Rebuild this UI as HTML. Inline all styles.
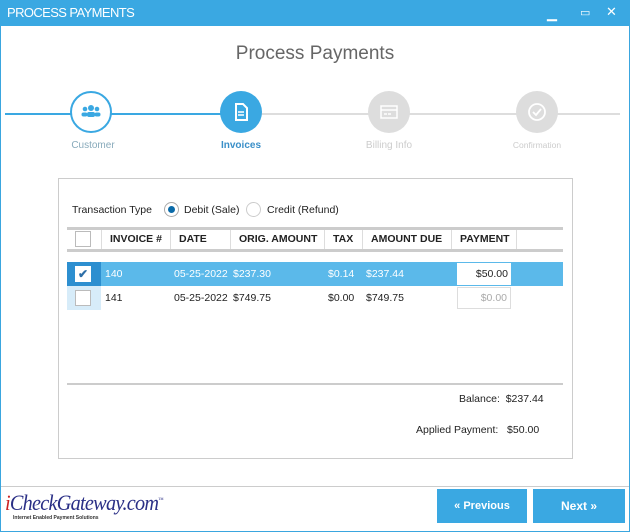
<!DOCTYPE html>
<html><head><style>
*{box-sizing:border-box;margin:0;padding:0}
body{width:630px;height:532px;overflow:hidden;font-family:"Liberation Sans",sans-serif;background:#fff;position:relative;font-size:11px;color:#222}
.win{position:absolute;left:0;top:0;width:630px;height:532px;border:1px solid #3aa6df;border-top:none}
.title{position:absolute;left:0;top:0;width:630px;height:26px;background:#3aa8e2;color:#fff;font-size:13px;padding:5px 7px;letter-spacing:-.6px}
.ctl{position:absolute;top:4px;color:#fff;font-size:13px}
.h1{position:absolute;top:43px;width:630px;text-align:center;font-size:19px;color:#666}
.line{position:absolute;top:113px;height:2px}
.circ{position:absolute;top:91px;width:42px;height:42px;border-radius:50%}
.lbl{position:absolute;top:140px;font-size:10px;text-align:center;width:100px}
.box{position:absolute;left:58px;top:178px;width:515px;height:281px;border:1px solid #ccc}
.abs{position:absolute}
.th{position:absolute;top:227px;height:25px;border-top:3px solid #ccc;border-bottom:3px solid #ccc;left:67px;width:496px}
.th div{position:absolute;top:0;height:19px;line-height:19px;font-weight:bold;font-size:10.5px;border-left:1px solid #ddd;padding-left:8px;color:#222}
.row{position:absolute;left:67px;width:496px;height:24px;line-height:24px;font-size:10.5px}
.row span{position:absolute}
.cb{position:absolute;width:16px;height:16px;border:1px solid #bbb;background:#fff}
.btn{position:absolute;top:489px;height:34px;background:#3aa8e2;color:#fff;font-weight:bold;text-align:center;line-height:34px;font-size:11px}
</style></head><body>
<div class="win"></div>
<div class="title">PROCESS PAYMENTS</div>
<div class="ctl" style="left:547px;top:6px">▁</div>
<div class="ctl" style="left:580px;font-size:11px;top:6px">▭</div>
<div class="ctl" style="left:606px">✕</div>
<div class="h1">Process Payments</div>
<div class="line" style="left:5px;width:236px;background:#3aa8e2;height:1.5px"></div>
<div class="line" style="left:241px;width:379px;background:#ddd"></div>
<div class="circ" style="left:70px;border:2px solid #3aa8e2;background:#fff"><svg width="38" height="38" viewBox="0 0 38 38"><g fill="#3aa8e2"><circle cx="19" cy="15" r="3"/><circle cx="13" cy="16" r="2.3"/><circle cx="25" cy="16" r="2.3"/><rect x="15" y="19" width="8" height="5" rx="2"/><rect x="9.5" y="19.5" width="6" height="4" rx="2"/><rect x="22.5" y="19.5" width="6" height="4" rx="2"/></g></svg></div>
<div class="circ" style="left:220px;background:#3aa8e2"><svg width="42" height="42" viewBox="0 0 42 42"><path d="M16 13h7l4 4v12h-11z" fill="none" stroke="#fff" stroke-width="2"/><path d="M18 21h6M18 24h6" stroke="#fff" stroke-width="1.5"/></svg></div>
<div class="circ" style="left:368px;background:#ddd"><svg width="42" height="42" viewBox="0 0 42 42"><rect x="13" y="15" width="16" height="12" fill="none" stroke="#fff" stroke-width="1.5"/><path d="M13 19h16M16 23h3M20 23h3" stroke="#fff" stroke-width="1.5"/></svg></div>
<div class="circ" style="left:516px;background:#ddd"><svg width="42" height="42" viewBox="0 0 42 42"><circle cx="21" cy="21" r="8" fill="none" stroke="#fff" stroke-width="1.8"/><path d="M17 21l3 3 5-6" fill="none" stroke="#fff" stroke-width="1.8"/></svg></div>
<div class="lbl" style="left:43px;color:#8ab">Customer</div>
<div class="lbl" style="left:191px;color:#3a8fc8;font-weight:bold">Invoices</div>
<div class="lbl" style="left:339px;color:#ccc">Billing Info</div>
<div class="lbl" style="left:487px;color:#ccc;font-size:8.5px">Confirmation</div>
<div class="box"></div>
<div class="abs" style="left:72px;top:204px;font-size:10.5px">Transaction Type</div>
<div class="abs" style="left:164px;top:202px;width:15px;height:15px;border-radius:50%;border:1px solid #aaa;background:#fff"><div style="position:absolute;left:3px;top:3px;width:7px;height:7px;border-radius:50%;background:#0a6aa8"></div></div>
<div class="abs" style="left:184px;top:204px;font-size:10.5px">Debit (Sale)</div>
<div class="abs" style="left:246px;top:202px;width:15px;height:15px;border-radius:50%;border:1px solid #ccc"></div>
<div class="abs" style="left:267px;top:204px;font-size:10.5px">Credit (Refund)</div>
<div class="th">
<div style="left:0;width:34px;border-left:none"><span class="cb" style="left:8px;top:1px"></span></div>
<div style="left:34px;width:69px">INVOICE #</div>
<div style="left:103px;width:60px">DATE</div>
<div style="left:163px;width:94px">ORIG. AMOUNT</div>
<div style="left:257px;width:38px">TAX</div>
<div style="left:295px;width:89px">AMOUNT DUE</div>
<div style="left:384px;width:65px">PAYMENT</div>
<div style="left:449px;width:47px"></div>
</div>
<div class="row" style="top:262px;background:#5bb9ea;color:#fff">
<span style="left:0;width:34px;height:24px;background:#2d8fd0"></span>
<span class="cb" style="left:8px;top:4px;border-color:#fff;color:#2d6fa8;line-height:14px;text-align:center;font-weight:bold;font-size:12px">✔</span>
<span style="left:38px">140</span><span style="left:107px">05-25-2022</span><span style="left:166px">$237.30</span><span style="left:261px">$0.14</span><span style="left:299px">$237.44</span>
<span style="left:390px;top:1px;width:54px;height:22px;background:#fff;color:#222;text-align:right;padding-right:3px;line-height:22px">$50.00</span>
</div>
<div class="row" style="top:286px">
<span style="left:0;width:34px;height:24px;background:#d7ecf9"></span>
<span class="cb" style="left:8px;top:4px"></span>
<span style="left:38px">141</span><span style="left:107px">05-25-2022</span><span style="left:166px">$749.75</span><span style="left:261px">$0.00</span><span style="left:299px">$749.75</span>
<span style="left:390px;top:1px;width:54px;height:22px;border:1px solid #ddd;color:#aaa;text-align:right;padding-right:3px;line-height:20px">$0.00</span>
</div>
<div class="abs" style="left:67px;top:383px;width:496px;height:2px;background:#ccc"></div>
<div class="abs" style="left:459px;top:393px;font-size:10.5px">Balance:&nbsp; $237.44</div>
<div class="abs" style="left:416px;top:424px;font-size:10.5px">Applied Payment:&nbsp;&nbsp; $50.00</div>
<div class="abs" style="left:1px;top:486px;width:628px;height:1px;background:#ccc"></div>
<div class="abs" style="left:5px;top:490px;font-family:'Liberation Serif',serif;font-style:italic;font-size:22px;color:#2a2f86;letter-spacing:-.8px;transform:scaleX(.92);transform-origin:left"><span style="color:#c22">i</span>CheckGateway.com<sup style="font-size:6px">™</sup></div>
<div class="abs" style="left:13px;top:515px;font-size:5px;font-weight:bold;color:#333">Internet Enabled Payment Solutions</div>
<div class="btn" style="left:437px;width:90px">« Previous</div>
<div class="btn" style="left:533px;width:92px;font-size:12px">Next »</div>
</body></html>
